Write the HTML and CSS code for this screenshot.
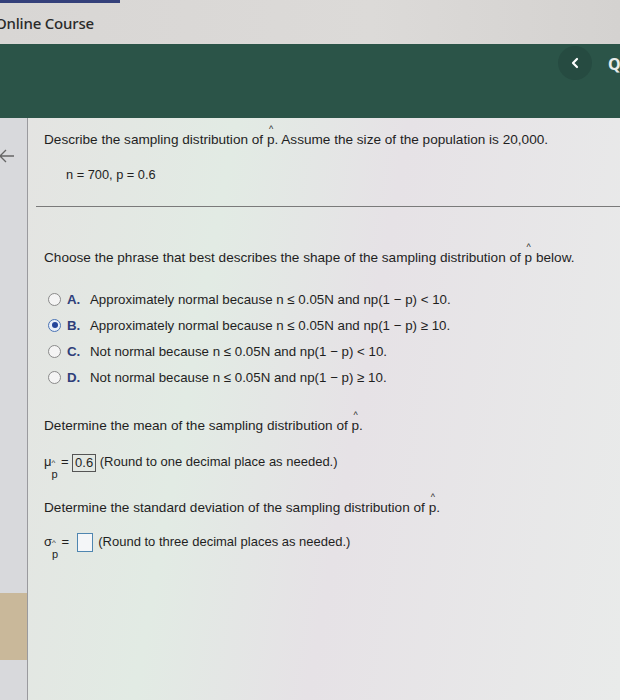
FILE: index.html
```html
<!DOCTYPE html>
<html>
<head>
<meta charset="utf-8">
<link rel="stylesheet" href="styles.css">
</head>
<body>
<div class="top">
  <div class="topbar"></div>
  <div class="brand">Online Course</div>
</div>
<div class="banner">
  <div class="navbtn"><svg width="10" height="12" viewBox="0 0 10 12"><path d="M7 2 L3 6 L7 10" fill="none" stroke="#fff" stroke-width="2.2" stroke-linecap="round" stroke-linejoin="round"/></svg></div>
  <div class="qbtn">Q</div>
</div>
<div class="main">
  <aside class="side">
    <svg class="back" width="18" height="16" viewBox="0 0 18 16"><path d="M16 8 H2 M8 2 L2 8 L8 14" fill="none" stroke="#666" stroke-width="1.3"/></svg>
    <div class="sideblock"></div>
  </aside>
  <section class="content">
    <p class="q">Describe the sampling distribution of <span class="ph">p</span>. Assume the size of the population is 20,000.</p>
    <p class="given">n = 700, p = 0.6</p>
    <hr class="rule">
    <p class="q choose">Choose the phrase that best describes the shape of the sampling distribution of <span class="ph">p</span> below.</p>
    <ul class="opts">
      <li><span class="radio"></span><b>A.</b><span>Approximately normal because n ≤ 0.05N and np(1 − p) &lt; 10.</span></li>
      <li><span class="radio on"></span><b>B.</b><span>Approximately normal because n ≤ 0.05N and np(1 − p) ≥ 10.</span></li>
      <li><span class="radio"></span><b>C.</b><span>Not normal because n ≤ 0.05N and np(1 − p) &lt; 10.</span></li>
      <li><span class="radio"></span><b>D.</b><span>Not normal because n ≤ 0.05N and np(1 − p) ≥ 10.</span></li>
    </ul>
    <p class="q mean">Determine the mean of the sampling distribution of <span class="ph">p</span>.</p>
    <p class="ans">μ<span class="sub">^<span class="sp">p</span></span> = <span class="box filled">0.6</span> (Round to one decimal place as needed.)</p>
    <p class="q sd">Determine the standard deviation of the sampling distribution of <span class="ph">p</span>.</p>
    <p class="ans sig">σ<span class="sub">^<span class="sp">p</span></span> = <span class="box empty"></span> (Round to three decimal places as needed.)</p>
  </section>
</div>
</body>
</html>
```
FILE: styles.css
```css
html, body { margin: 0; padding: 0; }
body {
  width: 620px;
  height: 700px;
  overflow: hidden;
  background: #e6e7e4;
  font-family: "Liberation Sans", Arial, sans-serif;
  color: #1f1f1f;
}
.top {
  height: 44px;
  background: linear-gradient(90deg, #d8d6d4, #dcdad8 60%, #d4d2d0);
  display: flex;
  flex-direction: column;
}
.topbar {
  width: 120px;
  height: 3px;
  background: #34407a;
}
.brand {
  margin: 10px 0 0 -5px;
  font-family: "Noto Sans", sans-serif;
  font-size: 15px;
  font-weight: 500;
  color: #2a2a2a;
  letter-spacing: -0.2px;
}
.banner {
  height: 74px;
  background: #2b5448;
  display: flex;
  justify-content: flex-end;
  align-items: flex-start;
  padding-top: 2px;
  box-sizing: border-box;
  gap: 14px;
}
.navbtn {
  width: 34px;
  height: 34px;
  border-radius: 50%;
  background: #264b41;
  display: flex;
  align-items: center;
  justify-content: center;
  margin-right: 2px;
}
.qbtn {
  width: 12px;
  overflow: hidden;
  margin-top: 7px;
  font-family: "Noto Sans", sans-serif;
  font-weight: 700;
  font-size: 16px;
  color: #e8ecea;
}
.main {
  display: flex;
  height: 582px;
}
.side {
  width: 27px;
  flex: none;
  border-right: 1px solid #9a9a9e;
  background: #d8d9dc;
  display: flex;
  flex-direction: column;
}
.back { margin: 30px 0 0 -2px; }
.sideblock {
  margin-top: 429px;
  height: 67px;
  background: #c9b89a;
}
.content {
  flex: 1;
  padding: 14px 0 0 16px;
  font-size: 13.6px;
  background: linear-gradient(100deg, #e4e4e2 0%, #e2ebe4 30%, #e6e2e6 55%, #e9ebea 100%);
}
.content p { margin: 0; }
.ph { position: relative; display: inline-block; }
.ph::before {
  content: "^";
  position: absolute;
  left: 2px;
  top: -8px;
  font-size: 9px;
}
.given { margin-top: 20px !important; padding-left: 22px; font-size: 12.8px; }
.rule {
  border: 0;
  border-top: 1px solid #7a7a7a;
  margin: 24px 0 0 -8px;
}
.choose { margin-top: 43px !important; }
.opts {
  list-style: none;
  margin: 27px 0 0 4px;
  padding: 0;
  display: flex;
  flex-direction: column;
  gap: 12px;
  font-size: 13.3px;
}
.opts li { display: flex; align-items: center; height: 14px; }
.opts b { color: #2f3f7a; width: 23px; font-weight: 700; margin-left: 6px; }
.radio {
  width: 13px;
  height: 13px;
  border: 1px solid #8a8a8a;
  border-radius: 50%;
  background: #f4f4f4;
  box-sizing: border-box;
  display: inline-flex;
  align-items: center;
  justify-content: center;
}
.radio.on { border: 1.5px solid #4b74b5; background: #e8eef8; }
.radio.on::after {
  content: "";
  width: 6px;
  height: 6px;
  border-radius: 50%;
  background: #23449a;
}
.mean { margin-top: 34px !important; }
.ans { margin-top: 20px !important; font-size: 13px; line-height: 18px; }
.sig { margin-top: 18px !important; }
.sub {
  position: relative;
  display: inline-block;
  font-size: 8px;
  vertical-align: 1px;
  margin-right: 2px;
}
.sp {
  position: absolute;
  left: 0;
  top: 11px;
  font-size: 11px;
}
.box { display: inline-block; vertical-align: middle; box-sizing: border-box; }
.box.filled { border: 1px solid #555; padding: 0 2px; line-height: 16px; }
.box.empty { width: 16px; height: 19px; border: 1.5px solid #4f86b0; background: #f4f6f8; margin: 0 2px 0 4px; }
.sd { margin-top: 28px !important; }
```
